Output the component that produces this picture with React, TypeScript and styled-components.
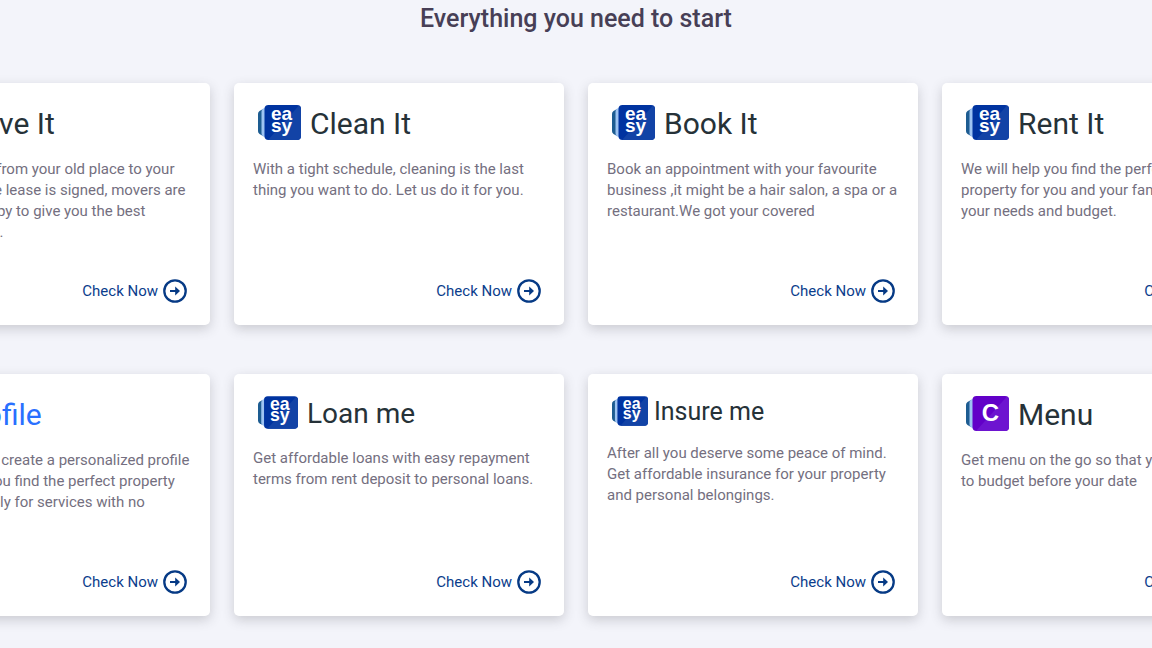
import React from "react";
import styled, { createGlobalStyle } from "styled-components";

const GlobalStyle = createGlobalStyle`
  * { box-sizing: border-box; }
  body {
    margin: 0;
    background: #f3f4fa;
    font-family: Roboto, "Liberation Sans", sans-serif;
    overflow-x: hidden;
  }
`;

type Size = "lg" | "md" | "sm";

const logoSizes = {
  lg: { width: 43, height: 35 },
  md: { width: 40, height: 33 },
  sm: { width: 36, height: 30 },
};
const titleSizes = { lg: 30, md: 28, sm: 25 };

const Section = styled.section`
  min-height: 100vh;
  overflow: hidden;
  padding-bottom: 32px;
`;

const Heading = styled.h2`
  margin: 0 0 47px;
  padding-top: 2px;
  text-align: center;
  font-size: 25px;
  line-height: 34px;
  font-weight: 500;
  color: #473f56;
`;

const Rows = styled.div`
  display: flex;
  flex-direction: column;
  gap: 49px;
`;

const Row = styled.div`
  display: flex;
  justify-content: center;
  gap: 24px;
`;

const Card = styled.article`
  flex: 0 0 330px;
  min-width: 0;
  min-height: 242px;
  display: flex;
  flex-direction: column;
  padding: 22px 23px 22px 19px;
  border-radius: 5px;
  background: #fff;
  box-shadow: 0 4px 12px rgba(60, 58, 70, 0.22);
`;

const Brand = styled.header<{ $size: Size }>`
  display: flex;
  align-items: center;
  gap: ${({ $size }) => ($size === "sm" ? 6 : 9)}px;
  height: ${({ $size }) => logoSizes[$size].height}px;
  margin-bottom: ${({ $size }) => ($size === "sm" ? 17 : 19)}px;
  padding-left: 5px;
`;

const Title = styled.h3<{ $size: Size; $accent?: boolean }>`
  margin: 0;
  padding-top: 2px;
  white-space: nowrap;
  font-size: ${({ $size }) => titleSizes[$size]}px;
  line-height: 36px;
  font-weight: 400;
  color: ${({ $accent }) => ($accent ? "#2970ff" : "#263238")};
`;

const Description = styled.p`
  margin: 0;
  white-space: pre;
  font-size: 15px;
  line-height: 21px;
  color: #746f80;
`;

const CheckLink = styled.a`
  display: flex;
  align-items: center;
  align-self: flex-end;
  gap: 5px;
  margin-top: auto;
  font-size: 15px;
  line-height: 24px;
  color: #0b3d8c;
  text-decoration: none;
`;

const LogoText = styled.text`
  font-family: "Liberation Sans", Arial, sans-serif;
  font-weight: 700;
  fill: #fff;
  text-anchor: middle;
`;

function Logo({ size, letter }: { size: Size; letter?: string }) {
  const main = letter ? "#6200c8" : "#0033a0";
  const shade = letter ? "#6d14d0" : "#1243a6";
  return (
    <svg {...logoSizes[size]} viewBox="0 0 43 35" aria-hidden="true">
      <path d="M5 4 1.500 6Q0 7 0 9v17q0 2 1.500 3L5 31Z" fill="#1d5c91" />
      <path d="M10 1 4.500 4Q3.500 5 3.500 7v21q0 2 1 3L10 34Z" fill="#9dc3f2" />
      <rect x="6.500" width="36.500" height="35" rx="4" fill={main} />
      <path d="M43 4v27q0 4-4 4H10L41 .6Q43 1.600 43 4Z" fill={shade} />
      {letter ? (
        <LogoText x="24.500" y="25" fontSize="24">{letter}</LogoText>
      ) : (
        <>
          <LogoText x="23.500" y="15" fontSize="19">ea</LogoText>
          <LogoText x="23.500" y="27" fontSize="19">sy</LogoText>
        </>
      )}
    </svg>
  );
}

function ArrowCircle() {
  return (
    <svg width="24" height="24" viewBox="0 0 24 24" fill="none" aria-hidden="true">
      <circle cx="12" cy="12" r="10.700" stroke="#063a85" strokeWidth="2.300" />
      <path d="M7 12h8" stroke="#063a85" strokeWidth="2" />
      <path d="m12.200 7.500 4.800 4.500-4.800 4.500Z" fill="#063a85" />
    </svg>
  );
}

interface Service {
  title: string;
  text: string;
  size?: Size;
  letter?: string;
  accent?: boolean;
}

const rows: Service[][] = [
  [
    { title: "Move It", text: "We help move from your old place to your\nplace. Once the lease is signed, movers are\non hand, standby to give you the best\nmoving service." },
    { title: "Clean It", text: "With a tight schedule, cleaning is the last\nthing you want to do. Let us do it for you." },
    { title: "Book It", text: "Book an appointment with your favourite\nbusiness ,it might be a hair salon, a spa or a\nrestaurant.We got your covered" },
    { title: "Rent It", text: "We will help you find the perfect\nproperty for you and your family to\nyour needs and budget." },
  ],
  [
    { title: "Profile", accent: true, text: "Sign up now to create a personalized profile\nthat will help you find the perfect property\nand simply apply for services with no\nhassle." },
    { title: "Loan me", size: "md", text: "Get affordable loans with easy repayment\nterms from rent deposit to personal loans." },
    { title: "Insure me", size: "sm", text: "After all you deserve some peace of mind.\nGet affordable insurance for your property\nand personal belongings." },
    { title: "Menu", letter: "C", text: "Get menu on the go so that you get\nto budget before your date" },
  ],
];

function ServiceCard({ title, text, size = "lg", letter, accent }: Service) {
  return (
    <Card>
      <Brand $size={size}>
        <Logo size={size} letter={letter} />
        <Title $size={size} $accent={accent}>{title}</Title>
      </Brand>
      <Description>{text}</Description>
      <CheckLink href="#">
        Check Now
        <ArrowCircle />
      </CheckLink>
    </Card>
  );
}

export default function App() {
  return (
    <>
      <GlobalStyle />
      <Section>
        <Heading>Everything you need to start</Heading>
        <Rows>
          {rows.map((row, i) => (
            <Row key={i}>
              {row.map((service) => (
                <ServiceCard key={service.title} {...service} />
              ))}
            </Row>
          ))}
        </Rows>
      </Section>
    </>
  );
}
